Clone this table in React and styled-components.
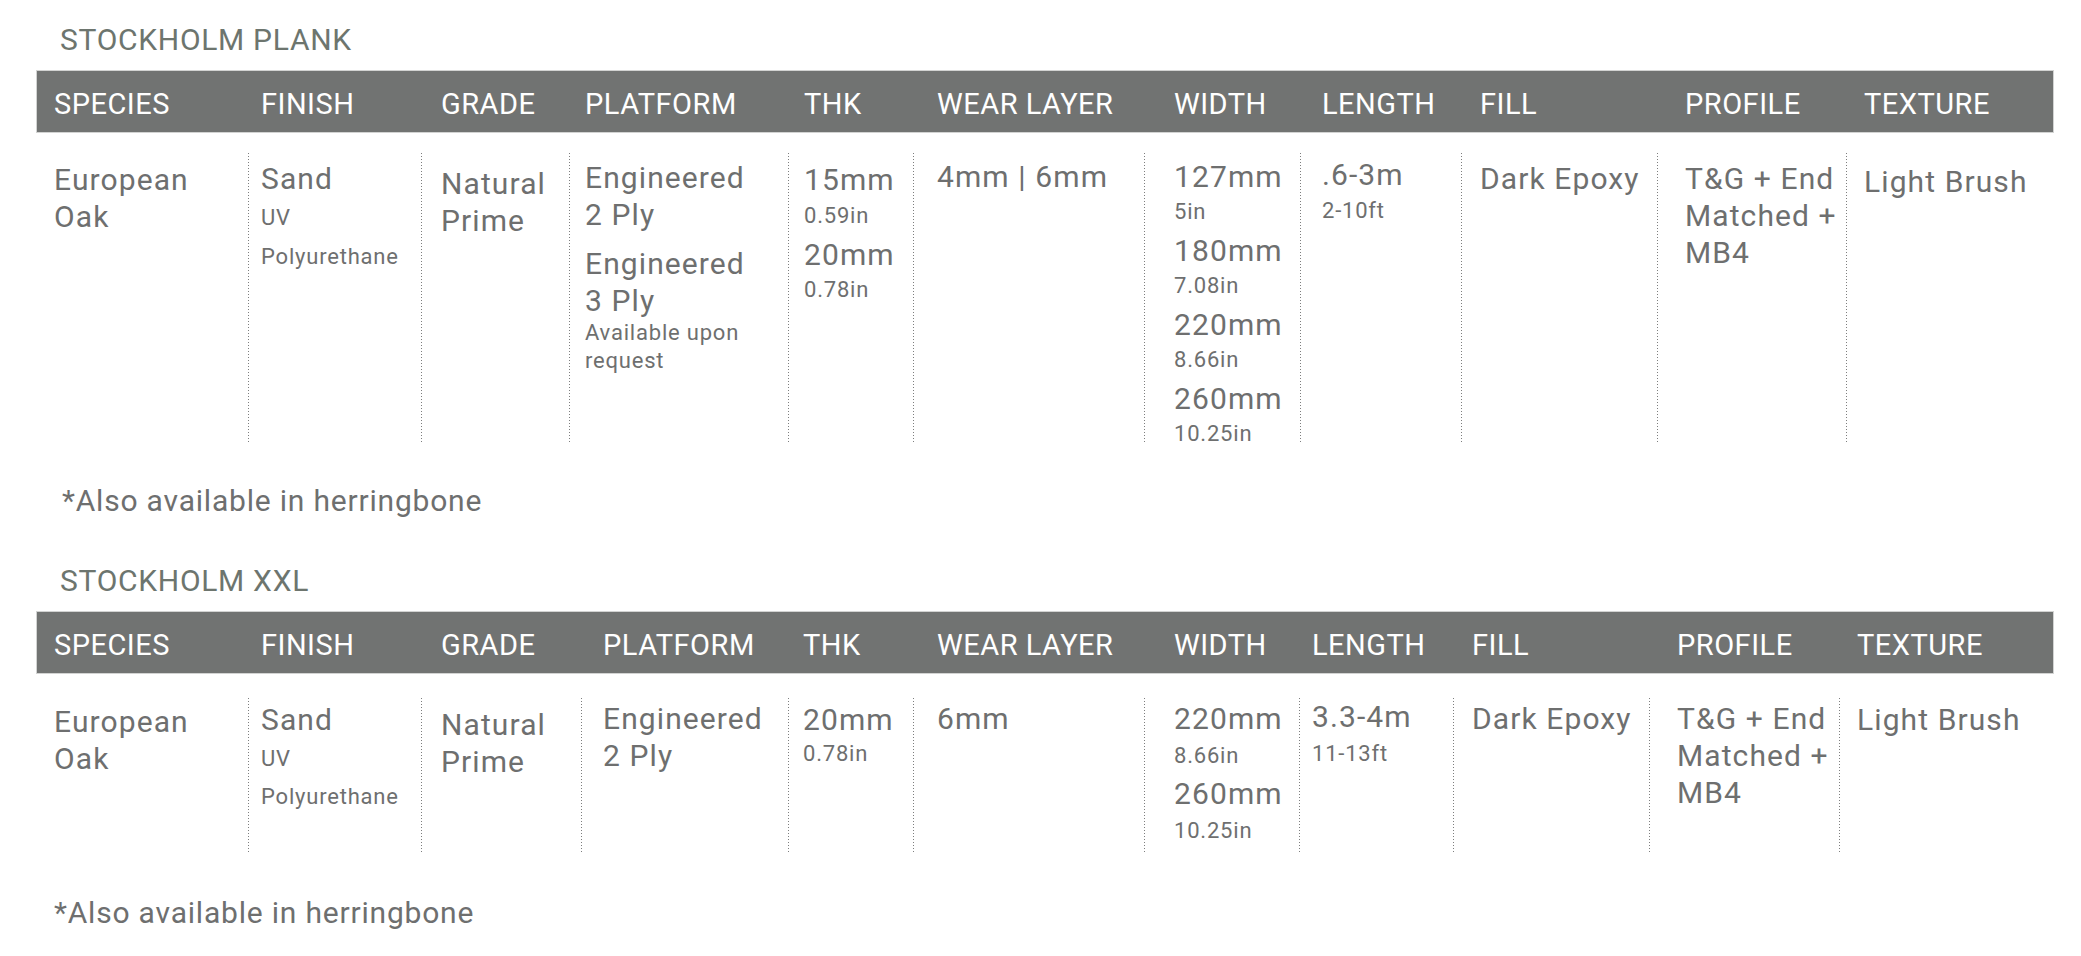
import React from 'react'
import styled, { createGlobalStyle } from 'styled-components'

const GlobalStyle = createGlobalStyle`
  html, body {
    margin: 0;
    padding: 0;
    background: #ffffff;
  }
  body {
    font-family: Roboto, "Liberation Sans", Arial, sans-serif;
  }
`

const HEADINGS = ['SPECIES', 'FINISH', 'GRADE', 'PLATFORM', 'THK', 'WEAR LAYER', 'WIDTH', 'LENGTH', 'FILL', 'PROFILE', 'TEXTURE']

// L = big value line, S = small sub line; mt = extra space above
const L = (t, mt = 0) => ({ t, mt })
const S = (t, mt = 0) => ({ t, mt, sm: true })

const TABLES = [
  {
    title: 'STOCKHOLM PLANK',
    cols: [[211, 17], [173, 13], [148, 20], [219, 16], [125, 16], [231, 24], [156, 30], [161, 22], [196, 19], [189, 28], [208, 18]],
    gap: 20,
    padTop: 7,
    height: 290,
    noteIndent: 25,
    noteGap: 40,
    cells: [
      { dy: 1, lines: [L('European'), L('Oak')] },
      { dy: 0, lines: [L('Sand'), S('UV', 7), S('Polyurethane', 11)] },
      { dy: 5, lines: [L('Natural'), L('Prime')] },
      { dy: -1, lines: [L('Engineered'), L('2 Ply'), L('Engineered', 12), L('3 Ply'), S('Available upon'), S('request')] },
      { dy: 1, lines: [L('15mm'), S('0.59in', 4), L('20mm', 6), S('0.78in', 3)] },
      { dy: -2, lines: [L('4mm | 6mm')] },
      { dy: -2, lines: [L('127mm'), S('5in', 3), L('180mm', 6), S('7.08in', 3), L('220mm', 6), S('8.66in', 3), L('260mm', 6), S('10.25in', 3)] },
      { dy: -4, lines: [L('.6-3m'), S('2-10ft', 4)] },
      { dy: 0, lines: [L('Dark Epoxy')] },
      { dy: 0, lines: [L('T&G + End'), L('Matched +'), L('MB4')] },
      { dy: 3, lines: [L('Light Brush')] },
    ],
  },
  {
    title: 'STOCKHOLM XXL',
    cols: [[211, 17], [173, 13], [160, 20], [207, 22], [125, 15], [231, 24], [155, 30], [154, 13], [196, 19], [190, 28], [215, 18]],
    gap: 24,
    padTop: 3,
    height: 155,
    noteIndent: 17,
    noteGap: 42,
    cells: [
      { dy: 2, lines: [L('European'), L('Oak')] },
      { dy: 0, lines: [L('Sand'), S('UV', 7), S('Polyurethane', 10)] },
      { dy: 5, lines: [L('Natural'), L('Prime')] },
      { dy: -1, lines: [L('Engineered'), L('2 Ply')] },
      { dy: 0, lines: [L('20mm'), S('0.78in', 2)] },
      { dy: -1, lines: [L('6mm')] },
      { dy: -1, lines: [L('220mm'), S('8.66in', 5), L('260mm', 5), S('10.25in', 5)] },
      { dy: -5, lines: [L('3.3-4m'), S('11-13ft', 5)] },
      { dy: -1, lines: [L('Dark Epoxy')] },
      { dy: -1, lines: [L('T&G + End'), L('Matched +'), L('MB4')] },
      { dy: 0, lines: [L('Light Brush')] },
    ],
  },
]

function SpecTable({ table, first }) {
  const template = table.cols.map(([w]) => `${w}px`).join(' ')
  return (
    <Section first={first}>
      <Title>{table.title}</Title>
      <HeaderBar cols={template}>
        {HEADINGS.map((h, i) => (
          <HeadCell key={h} pad={table.cols[i][1]}>{h}</HeadCell>
        ))}
      </HeaderBar>
      <Body cols={template} gap={table.gap} height={table.height}>
        {table.cells.map((cell, i) => (
          <Cell key={i} pad={table.cols[i][1]} top={table.padTop + cell.dy} divider={i > 0}>
            {cell.lines.map((line, j) =>
              line.sm
                ? <Small key={j} mt={line.mt}>{line.t}</Small>
                : <Big key={j} mt={line.mt}>{line.t}</Big>
            )}
          </Cell>
        ))}
      </Body>
      <Note indent={table.noteIndent} gap={table.noteGap}>*Also available in herringbone</Note>
    </Section>
  )
}

export default function App() {
  return (
    <>
      <GlobalStyle />
      <Page>
        {TABLES.map((t, i) => (
          <SpecTable key={t.title} table={t} first={i === 0} />
        ))}
      </Page>
    </>
  )
}

const Page = styled.div`
  width: 2017px;
  padding: 22px 27px 30px 37px;
`

const Section = styled.section`
  margin-top: ${props => (props.first ? '0' : '44px')};
`

const Title = styled.h2`
  margin: 0;
  padding-left: 23px;
  font-size: 30px;
  line-height: 36px;
  font-weight: 400;
  letter-spacing: 0.7px;
  color: #6d756e;
`

const HeaderBar = styled.div`
  display: grid;
  grid-template-columns: ${props => props.cols};
  box-sizing: border-box;
  height: 63px;
  margin-top: 12px;
  margin-left: -1px;
  background: #717372;
  border: 1px solid #d2d3d2;
  align-items: center;
`

const HeadCell = styled.div`
  padding-left: ${props => props.pad}px;
  padding-top: 4px;
  font-size: 29px;
  line-height: 34px;
  color: #ffffff;
  letter-spacing: 0.5px;
  white-space: nowrap;
`

const Body = styled.div`
  display: grid;
  grid-template-columns: ${props => props.cols};
  grid-template-rows: ${props => props.height}px;
  height: ${props => props.height}px;
  margin-top: ${props => props.gap}px;
`

const Cell = styled.div`
  display: flex;
  flex-direction: column;
  min-height: 0;
  overflow: visible;
  padding-left: ${props => props.pad}px;
  padding-top: ${props => props.top}px;
  color: #6e6f6f;
  background-image: ${props => (props.divider ? 'linear-gradient(to bottom, #7d7e7e 34%, transparent 34%)' : 'none')};
  background-size: 1px 3px;
  background-repeat: repeat-y;
  background-position: left top;
  white-space: nowrap;
`

const Big = styled.div`
  flex: none;
  font-size: 30px;
  line-height: 37px;
  letter-spacing: 1.1px;
  margin-top: ${props => props.mt}px;
`

const Small = styled.div`
  flex: none;
  font-size: 22px;
  line-height: 28px;
  letter-spacing: 0.8px;
  margin-top: ${props => props.mt}px;
`

const Note = styled.p`
  margin: ${props => props.gap}px 0 0;
  padding-left: ${props => props.indent}px;
  font-size: 30px;
  line-height: 36px;
  letter-spacing: 0.8px;
  color: #6e6f6f;
`
